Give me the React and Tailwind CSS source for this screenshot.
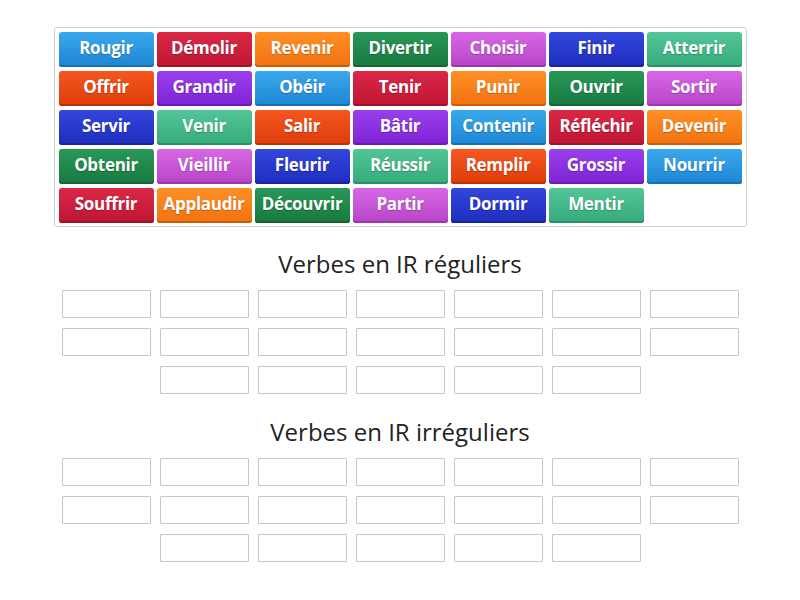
import React from 'react';

const COLORS = [
  'bg-gradient-to-b from-[#3aa8ec] to-[#1c86d4] shadow-[inset_0_-2px_0_#176fb3]',
  'bg-gradient-to-b from-[#da2746] to-[#bf1633] shadow-[inset_0_-2px_0_#a0112a]',
  'bg-gradient-to-b from-[#ff8f24] to-[#f07210] shadow-[inset_0_-2px_0_#cc5e08]',
  'bg-gradient-to-b from-[#279857] to-[#19793f] shadow-[inset_0_-2px_0_#136534]',
  'bg-gradient-to-b from-[#d867e6] to-[#b744c7] shadow-[inset_0_-2px_0_#9d35ad]',
  'bg-gradient-to-b from-[#3346dc] to-[#1e2dbd] shadow-[inset_0_-2px_0_#18249f]',
  'bg-gradient-to-b from-[#52c697] to-[#35aa7b] shadow-[inset_0_-2px_0_#2b9268]',
  'bg-gradient-to-b from-[#f5571e] to-[#de3c08] shadow-[inset_0_-2px_0_#bd3106]',
  'bg-gradient-to-b from-[#9a3fee] to-[#7d22d4] shadow-[inset_0_-2px_0_#6a1bb5]',
];

const words = [
  'Rougir', 'Démolir', 'Revenir', 'Divertir', 'Choisir', 'Finir', 'Atterrir',
  'Offrir', 'Grandir', 'Obéir', 'Tenir', 'Punir', 'Ouvrir', 'Sortir',
  'Servir', 'Venir', 'Salir', 'Bâtir', 'Contenir', 'Réfléchir', 'Devenir',
  'Obtenir', 'Vieillir', 'Fleurir', 'Réussir', 'Remplir', 'Grossir', 'Nourrir',
  'Souffrir', 'Applaudir', 'Découvrir', 'Partir', 'Dormir', 'Mentir',
];

const Tile = ({ word, idx }) => (
  <div
    className={`h-[35px] pb-[3px] rounded-[3px] flex items-center justify-center text-white font-bold text-[17px] tracking-[-0.3px] whitespace-nowrap [text-shadow:0_1px_1px_rgba(0,0,0,0.25)] ${COLORS[idx % 9]}`}
  >
    {word}
  </div>
);

const DropZone = ({ title }) => (
  <div className="flex flex-col items-center">
    <h2 className="text-[24px] leading-[32px] text-[#222]">{title}</h2>
    <div className="mt-[10px] w-[677px] flex flex-wrap justify-center gap-x-[9px] gap-y-[10px]">
      {Array.from({ length: 19 }).map((_, i) => (
        <div key={i} className="w-[89px] h-[28px] border border-[#c6c6c6] rounded-[1px] bg-white" />
      ))}
    </div>
  </div>
);

export default function App() {
  return (
    <div className="w-[800px] h-[600px] bg-white pt-[27px] font-['Open_Sans',sans-serif]">
      <div className="mx-auto w-[693px] border border-[#cfcfcf] rounded-[3px] px-[4px] pt-[4px] pb-[3px]">
        <div className="grid grid-cols-[repeat(7,95px)] gap-x-[3px] gap-y-[4px]">
          {words.map((w, i) => (
            <Tile key={w} word={w} idx={i} />
          ))}
        </div>
      </div>
      <div className="mt-[21px]">
        <DropZone title="Verbes en IR réguliers" />
      </div>
      <div className="mt-[22px]">
        <DropZone title="Verbes en IR irréguliers" />
      </div>
    </div>
  );
}
